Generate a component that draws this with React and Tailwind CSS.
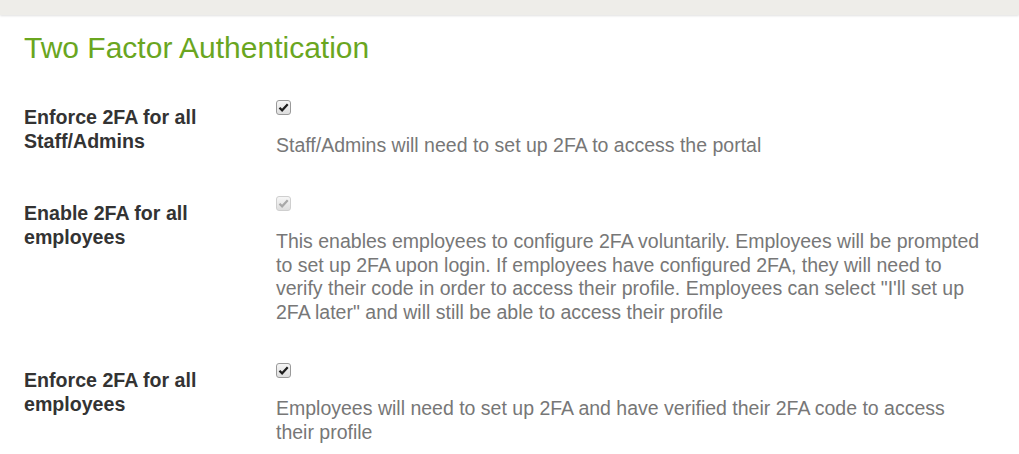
import React from 'react';

const settings = [
  {
    label: 'Enforce 2FA for all Staff/Admins',
    checked: true,
    disabled: false,
    description: 'Staff/Admins will need to set up 2FA to access the portal',
  },
  {
    label: 'Enable 2FA for all employees',
    checked: true,
    disabled: true,
    description:
      'This enables employees to configure 2FA voluntarily. Employees will be prompted to set up 2FA upon login. If employees have configured 2FA, they will need to verify their code in order to access their profile. Employees can select "I\'ll set up 2FA later" and will still be able to access their profile',
  },
  {
    label: 'Enforce 2FA for all employees',
    checked: true,
    disabled: false,
    description:
      'Employees will need to set up 2FA and have verified their 2FA code to access their profile',
  },
];

const Checkbox = ({ disabled }) => (
  <span
    className={`flex h-[15px] w-[15px] items-center justify-center rounded-[3px] border bg-gradient-to-b from-[#f6f6f6] to-[#dedede] ${
      disabled ? 'border-[#cfcfcf]' : 'border-[#9a9a9a]'
    }`}
  >
    <svg viewBox="0 0 12 12" className="h-[11px] w-[11px]">
      <path
        d="M1.6 6.2l2.9 2.9L10.6 2.4"
        fill="none"
        stroke={disabled ? '#a8a8a8' : '#1e1e1e'}
        strokeWidth="2.4"
      />
    </svg>
  </span>
);

const App = () => {
  return (
    <div className="min-h-[454px] w-[1019px] bg-white font-['Liberation_Sans',Arial,sans-serif]">
      <div className="h-[15px] bg-[#eeede9] shadow-[0_1px_2px_rgba(0,0,0,0.12)]" />
      <h1 className="ml-[24px] mt-[16px] text-[30px] leading-[34px] text-[#6aa61f]">
        Two Factor Authentication
      </h1>
      <div className="mt-[35px] flex flex-col gap-[38px] pl-[24px]">
        {settings.map((setting) => (
          <div key={setting.label} className="flex">
            <div className="w-[252px] shrink-0 pr-[40px] pt-[5px] text-[19.6px] font-bold leading-[24px] text-[#333]">
              {setting.label}
            </div>
            <div className="flex w-[708px] flex-col gap-[19px]">
              <Checkbox disabled={setting.disabled} />
              <p className="text-[19.5px] leading-[23.8px] text-[#777]">{setting.description}</p>
            </div>
          </div>
        ))}
      </div>
    </div>
  );
};

export default App;
